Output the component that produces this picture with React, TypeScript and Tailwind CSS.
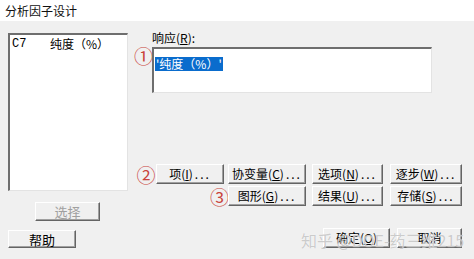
import React from "react";

const font = "font-['Noto_Sans_CJK_SC','Liberation_Sans',sans-serif]";

function WinButton({
	label,
	className = "",
	disabled = false,
}: {
	label: React.ReactNode;
	className?: string;
	disabled?: boolean;
}) {
	return (
		<button
			className={`flex items-center justify-center whitespace-nowrap bg-[#f0f0f0] border border-t-white border-l-white border-r-[#646464] border-b-[#646464] shadow-[inset_-1px_-1px_0_#a0a0a0] text-[12px] leading-none ${
				disabled ? "text-[#a0a0a0]" : "text-black"
			} ${className}`}
		>
			{label}
		</button>
	);
}

function Key({ k, rest }: { k: string; rest: string }) {
	// label with underlined mnemonic, e.g. 项(I)...
	return (
		<span className="whitespace-nowrap">
			{rest}(<span className="underline">{k}</span>)<span className="tracking-[2px] ml-[2px]">...</span>
		</span>
	);
}

function Circled({ n, className = "" }: { n: string; className?: string }) {
	return (
		<span
			className={`flex items-center justify-center text-[#c9433b] text-[19px] leading-none ${className}`}
		>
			{n}
		</span>
	);
}

export default function App() {
	return (
		<div className={`relative w-[474px] h-[259px] overflow-hidden bg-[#f0f0f0] ${font}`}>
			{/* title bar */}
			<div className="h-[21px] bg-white flex items-center pl-[5px] text-[12px] text-[#111]">
				分析因子设计
			</div>

			<div className="flex h-[238px]">
				{/* left column */}
				<div className="w-[135px] pl-[8px] pt-[12px] flex flex-col">
					<div className="w-[120px] h-[158px] bg-white border-t-2 border-l-2 border-t-[#6e6e6e] border-l-[#6e6e6e] border-r border-b border-r-[#e3e3e3] border-b-[#e3e3e3] flex text-[12px] leading-[14px] pt-[2px] pl-[2px]">
						<span className="w-[38px] font-['Liberation_Mono',monospace]">C7</span>
						<span>纯度（%）</span>
					</div>
					<WinButton label="选择" disabled className="mt-[11px] ml-[27px] w-[65px] h-[19px] text-[13px]" />
					<WinButton label="帮助" className="mt-[9px] w-[68px] h-[18px] text-[13px]" />
				</div>

				{/* right column */}
				<div className="flex-1 flex flex-col">
					<div className="ml-[17px] mt-[9px] h-[16px] text-[12px] leading-[16px] text-black">
						响应(<span className="underline">R</span>):
					</div>
					<div className="flex mt-[1px]">
						<Circled n="①" className="w-[17px] h-[18px] mt-[-1px]" />
						<div className="w-[280px] h-[46px] bg-white border-t-2 border-l-2 border-t-[#6e6e6e] border-l-[#6e6e6e] border-r border-b border-r-[#e3e3e3] border-b-[#e3e3e3] pl-[1px] pt-[1px]">
							<span className="bg-[#0a6ccd] text-white text-[12px] leading-[14px] px-[1px] inline-block">
								'纯度（%）'
							</span>
						</div>
					</div>

					{/* row 1 */}
					<div className="flex items-center mt-[71px] h-[20px]">
						<Circled n="②" className="ml-[2px] w-[18px]" />
						<WinButton label={<Key rest="项" k="I" />} className="ml-[1px] w-[68px] h-[20px]" />
						<WinButton label={<Key rest="协变量" k="C" />} className="ml-[4px] w-[78px] h-[20px]" />
						<WinButton label={<Key rest="选项" k="N" />} className="ml-[6px] w-[71px] h-[20px]" />
						<WinButton label={<Key rest="逐步" k="W" />} className="ml-[7px] w-[72px] h-[20px]" />
					</div>
					{/* row 2 */}
					<div className="flex items-center mt-[2px] h-[20px]">
						<Circled n="③" className="ml-[76px] w-[17px]" />
						<WinButton label={<Key rest="图形" k="G" />} className="w-[78px] h-[20px]" />
						<WinButton label={<Key rest="结果" k="U" />} className="ml-[6px] w-[71px] h-[20px]" />
						<WinButton label={<Key rest="存储" k="S" />} className="ml-[7px] w-[72px] h-[20px]" />
					</div>

					{/* ok / cancel */}
					<div className="flex mt-[22px]">
						<WinButton label={<span>确定(<span className="underline">O</span>)</span>} className="ml-[188px] w-[67px] h-[20px]" />
						<WinButton label="取消" className="ml-[7px] w-[65px] h-[20px]" />
					</div>
				</div>
			</div>

			{/* watermark */}
			<div className="absolute left-[301px] top-[230px] text-[16px] leading-[20px] text-[#9a9a9a]/50 whitespace-nowrap [text-shadow:0_0_1px_#ffffff]">
				知乎 @DOE-药三维215
			</div>
		</div>
	);
}
